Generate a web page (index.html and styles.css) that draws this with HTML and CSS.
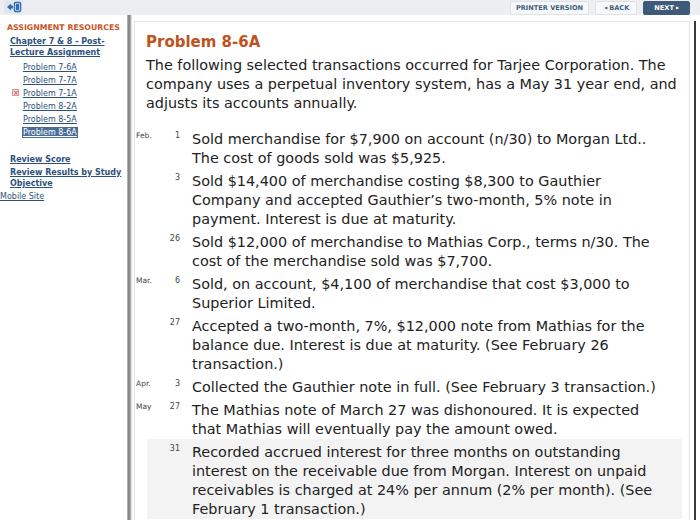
FILE: index.html
```html
<!DOCTYPE html>
<html>
<head>
<meta charset="utf-8">
<link rel="stylesheet" href="styles.css">
</head>
<body>
<div class="topbar">
  <div class="icon-btn">
    <svg width="16" height="12" viewBox="0 0 16 12">
      <path d="M1 6 L5 2.5 L5 4.5 L7 4.5 L7 7.5 L5 7.5 L5 9.5 Z" fill="#2f6db0"/>
      <rect x="8.5" y="1.5" width="6" height="9" rx="1" fill="none" stroke="#2f6db0" stroke-width="1.4"/>
      <rect x="10" y="3" width="3" height="6" fill="#2f6db0"/>
    </svg>
  </div>
  <div class="nav">
    <span class="btn">PRINTER VERSION</span>
    <span class="btn"><span class="tri">&#9664;</span>BACK</span>
    <span class="btn dark">NEXT<span class="tri">&#9654;</span></span>
  </div>
</div>
<div class="layout">
  <aside class="sidebar">
    <div class="res-title">ASSIGNMENT RESOURCES</div>
    <a class="chapter">Chapter 7 &amp; 8 - Post-Lecture Assignment</a>
    <ul class="problems">
      <li><a>Problem 7-6A</a></li>
      <li><a>Problem 7-7A</a></li>
      <li class="flag"><span class="x">&#215;</span><a>Problem 7-1A</a></li>
      <li><a>Problem 8-2A</a></li>
      <li><a>Problem 8-5A</a></li>
      <li><a class="current">Problem 8-6A</a></li>
    </ul>
    <a class="review">Review Score</a>
    <a class="review">Review Results by Study Objective</a>
    <a class="mobile">Mobile Site</a>
  </aside>
  <div class="divider"></div>
  <main class="panel">
    <h1 class="title">Problem 8-6A</h1>
    <p class="intro">The following selected transactions occurred for Tarjee Corporation. The company uses a perpetual inventory system, has a May 31 year end, and adjusts its accounts annually.</p>
    <div class="list">
      <div class="row"><span class="mon">Feb.</span><div class="body"><span class="day">1</span><span class="txt">Sold merchandise for $7,900 on account (n/30) to Morgan Ltd.. The cost of goods sold was $5,925.</span></div></div>
      <div class="row"><span class="mon"></span><div class="body"><span class="day">3</span><span class="txt">Sold $14,400 of merchandise costing $8,300 to Gauthier Company and accepted Gauthier’s two-month, 5% note in payment. Interest is due at maturity.</span></div></div>
      <div class="row"><span class="mon"></span><div class="body"><span class="day">26</span><span class="txt">Sold $12,000 of merchandise to Mathias Corp., terms n/30. The cost of the merchandise sold was $7,700.</span></div></div>
      <div class="row"><span class="mon">Mar.</span><div class="body"><span class="day">6</span><span class="txt">Sold, on account, $4,100 of merchandise that cost $3,000 to Superior Limited.</span></div></div>
      <div class="row"><span class="mon"></span><div class="body"><span class="day">27</span><span class="txt">Accepted a two-month, 7%, $12,000 note from Mathias for the balance due. Interest is due at maturity. (See February 26 transaction.)</span></div></div>
      <div class="row"><span class="mon">Apr.</span><div class="body"><span class="day">3</span><span class="txt">Collected the Gauthier note in full. (See February 3 transaction.)</span></div></div>
      <div class="row"><span class="mon">May</span><div class="body"><span class="day">27</span><span class="txt">The Mathias note of March 27 was dishonoured. It is expected that Mathias will eventually pay the amount owed.</span></div></div>
      <div class="row"><span class="mon"></span><div class="body shaded"><span class="day">31</span><span class="txt">Recorded accrued interest for three months on outstanding interest on the receivable due from Morgan. Interest on unpaid receivables is charged at 24% per annum (2% per month). (See February 1 transaction.)</span></div></div>
    </div>
  </main>
  <div class="scroll"></div>
</div>
</body>
</html>
```
FILE: styles.css
```css
html, body {
  margin: 0;
  padding: 0;
  background: #ffffff;
  font-family: "DejaVu Sans", Verdana, sans-serif;
  overflow: hidden;
  height: 520px;
}
.topbar {
  height: 15px;
  background: #eceef1;
  display: flex;
  justify-content: space-between;
  align-items: flex-start;
}
.icon-btn {
  margin-left: 4px;
  width: 19px;
  height: 14px;
  background: #dfe6ee;
  border-radius: 0 0 3px 3px;
  display: flex;
  align-items: center;
  justify-content: center;
}
.nav {
  display: flex;
  gap: 6px;
  margin-right: 10px;
  padding-top: 1px;
}
.btn {
  height: 12px;
  line-height: 12px;
  padding: 0 5px;
  font-size: 6.6px;
  font-weight: bold;
  letter-spacing: 0;
  color: #3f5e80;
  background: #f7f8fa;
  border: 1px solid #dde2e8;
  border-radius: 2px;
  display: flex;
  align-items: center;
}
.btn:nth-child(2) {
  padding: 0 7px 0 6px;
}
.btn.dark {
  background: #3f5a78;
  border-color: #3f5a78;
  color: #ffffff;
  padding: 0 8px 0 10px;
}
.tri {
  font-size: 4px;
  margin: 0 2px;
}
.layout {
  display: flex;
  height: 505px;
  padding-top: 6px;
}
.sidebar {
  width: 127px;
  flex: none;
  font-size: 8px;
  padding-top: 1px;
}
.sidebar a {
  color: #2d517c;
  text-decoration: underline;
  display: block;
}
.res-title {
  color: #c8541e;
  font-weight: bold;
  font-size: 7.8px;
  padding-left: 7px;
  line-height: 11px;
}
.chapter {
  font-weight: bold;
  padding-left: 10px;
  padding-top: 3px;
  line-height: 11px;
  width: 100px;
}
.problems {
  list-style: none;
  margin: 3px 0 0;
  padding: 0 0 0 22px;
}
.problems li {
  height: 13px;
  line-height: 13px;
  position: relative;
}
.problems a {
  display: inline-block !important;
  padding: 0 1px;
  line-height: 11px;
}
.problems a.current {
  background: #4a6d96;
  color: #ffffff;
}
.x {
  position: absolute;
  left: -10px;
  top: 2px;
  width: 7px;
  height: 7px;
  border: 1px solid #d99;
  background: #f6dada;
  color: #c33;
  font-size: 7px;
  line-height: 7px;
  text-align: center;
  box-sizing: border-box;
}
.review {
  font-weight: bold;
  padding-left: 10px;
  line-height: 11px;
  margin-top: 2px;
  width: 115px;
}
.problems + .review {
  margin-top: 15px;
}
.mobile {
  margin-top: 2px;
  line-height: 11px;
}
.divider {
  width: 6px;
  flex: none;
  margin-top: -6px;
  background: linear-gradient(to right, #d8d8d8 0, #8a8a8a 1px, #8a8a8a 3px, #d0d0d0 4px, #f4f4f4 5px, #ffffff 6px);
}
.panel {
  flex: 1;
  border: 1px solid #dfe6ee;
  border-bottom: none;
  margin-left: 1px;
  padding: 10px 7px 0 11px;
  color: #222222;
  min-width: 0;
}
.title {
  margin: 0 0 4px;
  font-size: 15px;
  color: #c0521d;
  font-weight: bold;
  line-height: 20px;
}
.intro {
  margin: 0;
  font-size: 14.4px;
  line-height: 19px;
}
.list {
  margin-top: 17px;
  margin-left: -11px;
}
.row {
  display: flex;
  margin-bottom: 4px;
}
.mon {
  width: 11px;
  flex: none;
  font-size: 7.5px;
  line-height: 10px;
  color: #444;
  white-space: nowrap;
  padding-top: 1px;
  padding-left: 1px;
}
.body {
  flex: 1;
  display: flex;
}
.body.shaded {
  background: #f3f3f3;
  padding-top: 4px;
  margin-top: -4px;
}
.day {
  width: 33px;
  flex: none;
  text-align: right;
  font-size: 8px;
  line-height: 10px;
  color: #444;
  padding-top: 1px;
}
.txt {
  margin-left: 12px;
  font-size: 14.4px;
  line-height: 19px;
  padding-right: 15px;
}
.scroll {
  width: 10px;
  flex: none;
  background: linear-gradient(to right, #ffffff 0, #ffffff 4px, #3a3a3a 4px, #3a3a3a 6px, #ffffff 6px);
}
```
